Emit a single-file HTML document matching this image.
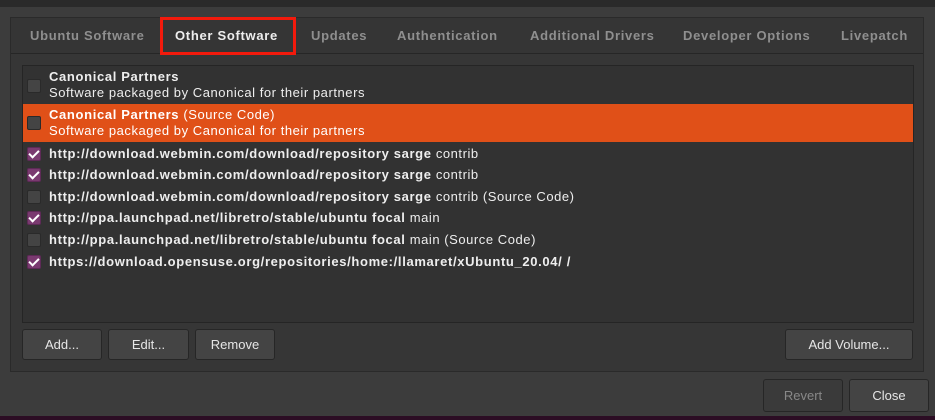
<!DOCTYPE html>
<html><head><style>
body{margin:0;width:935px;height:420px;background:#3c3c3c;position:relative;overflow:hidden;font-family:"Liberation Sans",sans-serif;}
.a{position:absolute}
.top{left:0;top:0;width:935px;height:7px;background:#2a2a2a}
.nb{left:10px;top:17px;width:914px;height:355px;border:1px solid #2a2a2a;background:#363636;box-sizing:border-box}
.tabs{left:11px;top:18px;width:912px;height:35px;background:#353535;border-bottom:1px solid #262626}
.tab{top:28px;font-size:13px;font-weight:bold;color:#8f8f8f;letter-spacing:0.7px}
.list{left:22px;top:65px;width:892px;height:258px;background:#323232;border:1px solid #252525;box-sizing:border-box}
.sel{left:23px;top:104px;width:890px;height:38px;background:#e05018}
.cb{width:12px;height:12px;border-radius:2px;background:#444;border:1px solid #2a2a2a;left:27px}
.ck{background:#7a3a70;border-color:#5e2a57}
.ck:after{content:"";position:absolute;left:3px;top:0px;width:4px;height:8px;border:solid #fff;border-width:0 2px 2px 0;transform:rotate(45deg)}
.t{left:49px;font-size:13px;color:#eee;white-space:nowrap;letter-spacing:0.55px}
.t b{font-weight:bold;letter-spacing:0.65px}
.btn{height:31px;border:1px solid #262626;border-radius:3px;background:#444;color:#e6e6e6;font-size:13px;display:flex;align-items:center;justify-content:center;box-sizing:border-box}
</style></head><body>
<div class="a top"></div>
<div class="a nb"></div>
<div class="a tabs"></div>
<div class="a tab" style="left:30px">Ubuntu Software</div>
<div class="a tab" style="left:175px;color:#eee">Other Software</div>
<div class="a" style="left:160px;top:17px;width:136px;height:38px;border:3px solid #f21a0c;box-sizing:border-box"></div>
<div class="a tab" style="left:311px">Updates</div>
<div class="a tab" style="left:397px">Authentication</div>
<div class="a tab" style="left:530px">Additional Drivers</div>
<div class="a tab" style="left:683px">Developer Options</div>
<div class="a tab" style="left:841px">Livepatch</div>
<div class="a list"></div>
<div class="a sel"></div>
<div class="a cb" style="top:79px"></div>
<div class="a t" style="top:69px;line-height:16px"><b>Canonical Partners</b><br>Software packaged by Canonical for their partners</div>
<div class="a cb" style="top:116px"></div>
<div class="a t" style="top:107px;line-height:16px;color:#fff"><b>Canonical Partners</b> (Source Code)<br>Software packaged by Canonical for their partners</div>
<div class="a cb ck" style="top:147px"></div>
<div class="a t" style="top:146px"><b>http://download.webmin.com/download/repository sarge</b> contrib</div>
<div class="a cb ck" style="top:168px"></div>
<div class="a t" style="top:167px"><b>http://download.webmin.com/download/repository sarge</b> contrib</div>
<div class="a cb" style="top:190px"></div>
<div class="a t" style="top:189px"><b>http://download.webmin.com/download/repository sarge</b> contrib (Source Code)</div>
<div class="a cb ck" style="top:211px"></div>
<div class="a t" style="top:210px"><b>http://ppa.launchpad.net/libretro/stable/ubuntu focal</b> main</div>
<div class="a cb" style="top:233px"></div>
<div class="a t" style="top:232px"><b>http://ppa.launchpad.net/libretro/stable/ubuntu focal</b> main (Source Code)</div>
<div class="a cb ck" style="top:255px"></div>
<div class="a t" style="top:254px"><b>https://download.opensuse.org/repositories/home:/llamaret/xUbuntu_20.04/ /</b></div>
<div class="a btn" style="left:22px;top:329px;width:80px">Add...</div>
<div class="a btn" style="left:108px;top:329px;width:81px">Edit...</div>
<div class="a btn" style="left:195px;top:329px;width:80px">Remove</div>
<div class="a btn" style="left:785px;top:329px;width:128px">Add Volume...</div>
<div class="a btn" style="left:763px;top:379px;width:80px;height:33px;background:#3a3a3a;color:#888">Revert</div>
<div class="a btn" style="left:849px;top:379px;width:80px;height:33px">Close</div>
<div class="a" style="left:0;top:416px;width:935px;height:4px;background:#2c0d24"></div>
</body></html>
